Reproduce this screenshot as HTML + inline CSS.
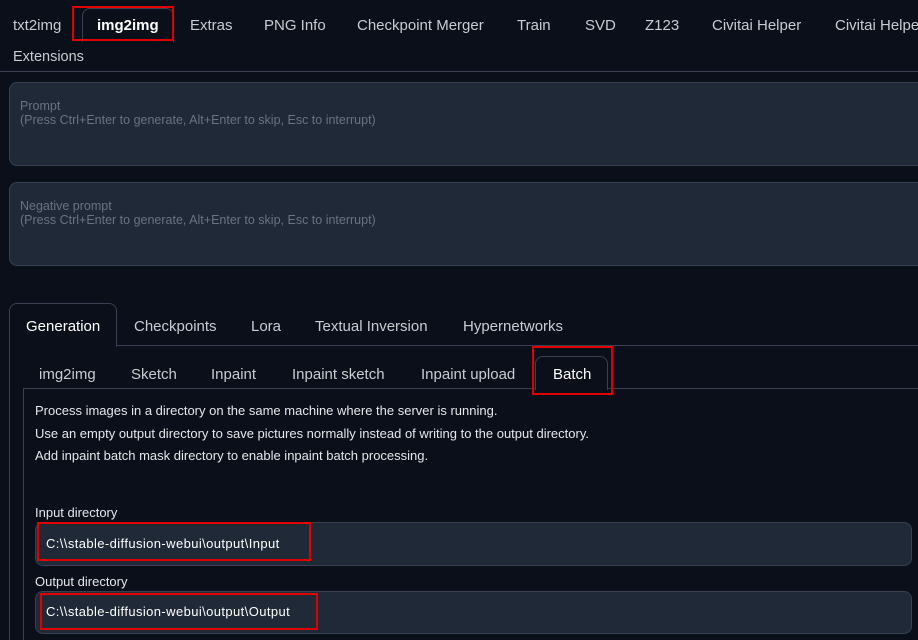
<!DOCTYPE html>
<html><head><style>
body{margin:0;width:918px;height:640px;background:#0b0f19;font-family:"Liberation Sans",sans-serif;overflow:hidden;position:relative;color:#d1d5db}
.a{position:absolute;white-space:nowrap}
.t{font-size:15px;color:#c9ccd1;top:17px}
.box{position:absolute;background:#1f2937;border:1px solid #374151;border-radius:8px}
.ph{color:#6b7280;font-size:12.5px;line-height:14px}
.red{position:absolute;border:2px solid #e00000}
.st{font-size:15px;color:#c9ccd1}
.p{font-size:13px;color:#e5e7eb}
</style></head><body>
<div class="a" style="left:82px;top:8px;width:90px;height:33px;border:1px solid #374151;border-bottom:none;border-radius:8px 8px 0 0"></div>
<div class="a t" style="left:13px">txt2img</div>
<div class="a t" style="left:97px;color:#fff;font-weight:bold">img2img</div>
<div class="a t" style="left:190px">Extras</div>
<div class="a t" style="left:264px">PNG Info</div>
<div class="a t" style="left:357px">Checkpoint Merger</div>
<div class="a t" style="left:517px">Train</div>
<div class="a t" style="left:585px">SVD</div>
<div class="a t" style="left:645px">Z123</div>
<div class="a t" style="left:712px">Civitai Helper</div>
<div class="a t" style="left:835px">Civitai Helper</div>
<div class="a t" style="left:13px;top:49px;font-size:14.5px">Extensions</div>
<div class="a" style="left:0;top:71px;width:918px;height:1px;background:#374151"></div>
<div class="red" style="left:72px;top:6px;width:98px;height:31px"></div>

<div class="box" style="left:9px;top:82px;width:920px;height:82px"><div class="ph" style="padding:16px 10px">Prompt<br>(Press Ctrl+Enter to generate, Alt+Enter to skip, Esc to interrupt)</div></div>
<div class="box" style="left:9px;top:182px;width:920px;height:82px"><div class="ph" style="padding:16px 10px">Negative prompt<br>(Press Ctrl+Enter to generate, Alt+Enter to skip, Esc to interrupt)</div></div>

<div class="a" style="left:9px;top:303px;width:106px;height:43px;border:1px solid #374151;border-bottom:none;border-radius:8px 8px 0 0;background:#0b0f19;z-index:2"></div>
<div class="a" style="left:116px;top:345px;width:802px;height:1px;background:#374151"></div>
<div class="a" style="left:9px;top:346px;width:1px;height:294px;background:#374151"></div>
<div class="a st" style="left:26px;top:318px;color:#fff;z-index:3">Generation</div>
<div class="a st" style="left:134px;top:318px">Checkpoints</div>
<div class="a st" style="left:251px;top:318px">Lora</div>
<div class="a st" style="left:315px;top:318px">Textual Inversion</div>
<div class="a st" style="left:463px;top:318px">Hypernetworks</div>

<div class="a" style="left:535px;top:356px;width:71px;height:33px;border:1px solid #374151;border-bottom:none;border-radius:8px 8px 0 0;background:#0b0f19;z-index:2"></div>
<div class="a" style="left:23px;top:388px;width:512px;height:1px;background:#374151"></div>
<div class="a" style="left:607px;top:388px;width:311px;height:1px;background:#374151"></div>
<div class="a" style="left:23px;top:388px;width:1px;height:252px;background:#374151"></div>
<div class="a st" style="left:39px;top:366px">img2img</div>
<div class="a st" style="left:131px;top:366px">Sketch</div>
<div class="a st" style="left:211px;top:366px">Inpaint</div>
<div class="a st" style="left:292px;top:366px">Inpaint sketch</div>
<div class="a st" style="left:421px;top:366px">Inpaint upload</div>
<div class="a st" style="left:553px;top:366px;color:#fff;z-index:3">Batch</div>
<div class="red" style="left:532px;top:346px;width:77px;height:45px;z-index:4"></div>

<div class="a p" style="left:35px;top:403px">Process images in a directory on the same machine where the server is running.</div>
<div class="a p" style="left:35px;top:426px">Use an empty output directory to save pictures normally instead of writing to the output directory.</div>
<div class="a p" style="left:35px;top:448px">Add inpaint batch mask directory to enable inpaint batch processing.</div>

<div class="a p" style="left:35px;top:505px">Input directory</div>
<div class="box" style="left:35px;top:522px;width:875px;height:42px"></div>
<div class="a p" style="left:46px;top:536px;color:#fff;letter-spacing:0.4px">C:\\stable-diffusion-webui\output\Input</div>
<div class="red" style="left:37px;top:522px;width:270px;height:35px"></div>
<div class="a p" style="left:35px;top:574px">Output directory</div>
<div class="box" style="left:35px;top:591px;width:875px;height:41px"></div>
<div class="a p" style="left:46px;top:604px;color:#fff;letter-spacing:0.4px">C:\\stable-diffusion-webui\output\Output</div>
<div class="red" style="left:40px;top:593px;width:274px;height:33px"></div>
</body></html>
